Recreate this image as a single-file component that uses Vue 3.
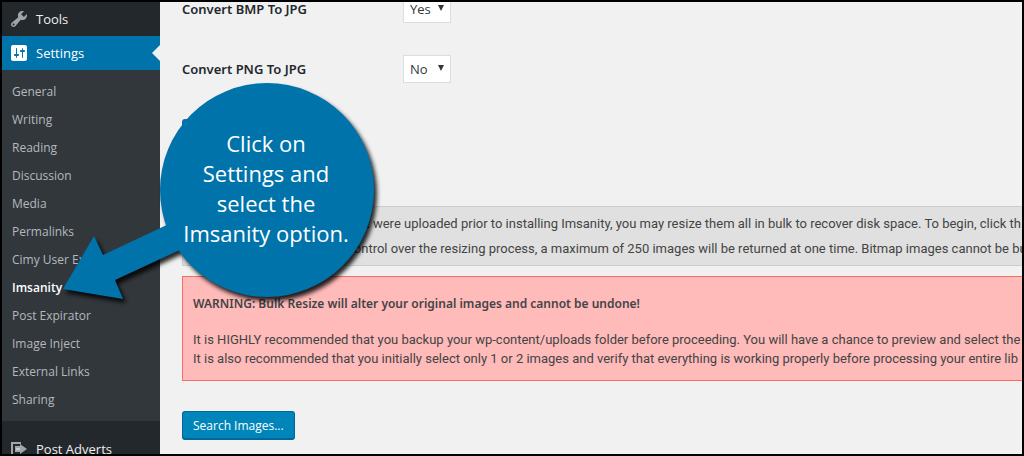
<script setup>
import { ref } from 'vue'

const submenu = [
  'General', 'Writing', 'Reading', 'Discussion', 'Media', 'Permalinks',
  'Cimy User Extra', 'Imsanity', 'Post Expirator', 'Image Inject',
  'External Links', 'Sharing',
]
const current = 'Imsanity'
const bmp = ref('Yes')
const png = ref('No')
</script>

<template>
  <div class="screen">
    <nav class="sidebar" aria-label="Admin menu">
      <a class="item" href="#">
        <svg class="icon" viewBox="0 0 20 20" aria-hidden="true"><path d="M16.68 9.77c-1.34 1.34-3.3 1.67-4.95.99l-5.41 6.52c-.99.99-2.59.99-3.58 0s-.99-2.59 0-3.57l6.52-5.42c-.68-1.65-.35-3.61.99-4.95 1.28-1.28 3.12-1.62 4.72-1.06l-2.89 2.89 2.82 2.82 2.86-2.87c.53 1.58.18 3.39-1.08 4.65zM3.81 16.21c.4.39 1.04.39 1.43 0 .4-.4.4-1.04 0-1.43-.39-.4-1.03-.4-1.43 0-.39.39-.39 1.03 0 1.43z" /></svg>
        <span>Tools</span>
      </a>
      <a class="item active" href="#">
        <svg class="icon" viewBox="0 0 20 20" aria-hidden="true"><path d="M18 16V4c0-1.100-.9-2-2-2H4c-1.100 0-2 .9-2 2v12c0 1.100.9 2 2 2h12c1.100 0 2-.9 2-2zM8 11h1c.55 0 1 .45 1 1s-.45 1-1 1H8v1.500c0 .28-.22.5-.5.5s-.5-.22-.5-.5V13H6c-.55 0-1-.45-1-1s.45-1 1-1h1V5.500c0-.28.22-.5.5-.5s.5.22.5.5V11zm5-2h-1c-.55 0-1-.45-1-1s.45-1 1-1h1V5.500c0-.28.22-.5.5-.5s.5.22.5.5V7h1c.55 0 1 .45 1 1s-.45 1-1 1h-1v5.500c0 .28-.22.5-.5.5s-.5-.22-.5-.5V9z" /></svg>
        <span>Settings</span>
      </a>
      <div class="submenu">
        <a v-for="name in submenu" :key="name" href="#" class="sub" :class="{ current: name === current }">{{ name }}</a>
      </div>
      <a class="item last" href="#">
        <svg class="icon" viewBox="0 0 20 20" aria-hidden="true"><path d="M12 3H2v14h10v-2H4V5h8zM6 7v6h5v2l7-5-7-5v2z" /><path class="cut" d="M7 9h4v2H7z" /></svg>
        <span>Post Adverts</span>
      </a>
    </nav>

    <main class="main">
      <div class="field">
        <label for="bmp">Convert BMP To JPG</label>
        <span class="picker">
          <select id="bmp" v-model="bmp"><option>Yes</option><option>No</option></select>
        </span>
      </div>
      <div class="field">
        <label for="png">Convert PNG To JPG</label>
        <span class="picker">
          <select id="png" v-model="png"><option>Yes</option><option>No</option></select>
        </span>
      </div>
      <div class="block" aria-hidden="true"></div>
      <section class="note">
        <p>that were uploaded prior to installing Imsanity, you may resize them all in bulk to recover disk space. To begin, click th</p>
        <p>control over the resizing process, a maximum of 250 images will be returned at one time. Bitmap images cannot be bu</p>
      </section>
      <section class="warning">
        <h2>WARNING: Bulk Resize will alter your original images and cannot be undone!</h2>
        <p>It is HIGHLY recommended that you backup your wp-content/uploads folder before proceeding. You will have a chance to preview and select the<br>It is also recommended that you initially select only 1 or 2 images and verify that everything is working properly before processing your entire lib</p>
      </section>
      <button type="button" class="search">Search Images...</button>
    </main>

    <div class="callout">
      <svg class="arrow" viewBox="0 0 316 220" aria-hidden="true">
        <path d="M3 207 34 154 43 173 130 132 150 154 55 198 63 217Z" />
        <circle cx="207" cy="108" r="107" />
      </svg>
      <p class="tip">Click on<br>Settings and<br>select the<br>Imsanity option.</p>
    </div>
  </div>
</template>

<style>
body {
  background: #f1f1f1;
}
</style>

<style scoped>
.screen {
  position: relative;
  box-sizing: border-box;
  display: flex;
  height: 100vh;
  overflow: hidden;
  border: 2px solid #000;
  background: #f1f1f1;
  color: #444;
  font: 12px/19px "Noto Sans", "Open Sans", sans-serif;
}
.sidebar {
  flex: 0 0 158px;
  background: #23282d;
  font-family: "Open Sans", "Noto Sans", sans-serif;
}
.item {
  position: relative;
  display: flex;
  align-items: center;
  gap: 7px;
  height: 34px;
  padding-left: 7px;
  color: #eee;
  font-size: 13px;
  text-decoration: none;
}
.icon {
  width: 20px;
  height: 20px;
  fill: #a0a5aa;
}
.cut {
  fill: #c8ccd0;
}
.active {
  background: #0073aa;
  color: #fff;
}
.active .icon {
  fill: #fff;
}
.active::after {
  content: "";
  position: absolute;
  right: 0;
  top: 9px;
  border: 8px solid transparent;
  border-left: 0;
  border-right-color: #f1f1f1;
}
.submenu {
  padding: 8px 0 7px;
  background: #32373c;
}
.sub {
  display: block;
  padding-left: 10px;
  color: #b4b9be;
  line-height: 28px;
  text-decoration: none;
}
.current {
  color: #fff;
  font-weight: 600;
}
.last {
  margin-top: 11px;
}
.main {
  flex: 1;
  min-width: 0;
  padding-left: 22px;
}
.field {
  display: flex;
  align-items: center;
  height: 28px;
  margin-bottom: 32px;
}
.field:first-child {
  margin-top: -7px;
}
.field label {
  width: 221px;
  color: #23282d;
  font-size: 13px;
  font-weight: 600;
  line-height: 15px;
}
.picker {
  position: relative;
}
.picker::after {
  content: "";
  position: absolute;
  right: 7px;
  top: 10px;
  border: 3px solid transparent;
  border-top: 6px solid #32373c;
  border-bottom: 0;
}
select {
  display: block;
  appearance: none;
  width: 48px;
  height: 28px;
  padding: 0 6px;
  border: 1px solid #ddd;
  border-radius: 0;
  background: #fff;
  color: #32373c;
  font: 13px "Open Sans", "Noto Sans", sans-serif;
}
.block {
  width: 100px;
  height: 28px;
  margin: 36px 0 59px;
  border-radius: 3px;
  background: #0073aa;
}
.note,
.warning {
  padding: 0 10px;
  border: 1px solid #ccc;
  border-right: 0;
  white-space: nowrap;
}
.note {
  padding: 4px 0 4px 164px;
  background: #e0e0e0;
}
.note p {
  margin: 0;
  font: 13px/25px Roboto, "Open Sans", sans-serif;
}
.warning {
  margin: 10px 0 30px;
  padding: 17px 0 12px 10px;
  border-color: #f76c64;
  background: #ffbaba;
}
h2 {
  margin: 0 0 17px;
  font-size: 12px;
  font-weight: 600;
  line-height: 19px;
}
.warning p {
  margin: 0;
  font: 13px/19px Roboto, "Open Sans", sans-serif;
}
.search {
  height: 29px;
  padding: 0 10px;
  border: 1px solid #006799;
  border-bottom-width: 2px;
  border-radius: 3px;
  background: #0085ba;
  color: #fff;
  font: 12px "Open Sans", "Noto Sans", sans-serif;
}
.callout {
  position: absolute;
  left: 58px;
  top: 80px;
  width: 316px;
  height: 220px;
  pointer-events: none;
}
.arrow {
  position: absolute;
  inset: 0;
  overflow: visible;
  fill: #0073aa;
  filter: drop-shadow(3px 4px 2px rgb(0 0 0 / 85%));
}
.tip {
  position: absolute;
  left: 99px;
  top: 46px;
  width: 214px;
  margin: 0;
  color: #fff;
  font-family: "Open Sans", "Noto Sans", sans-serif;
  font-size: 22px;
  line-height: 30px;
  text-align: center;
}
</style>
